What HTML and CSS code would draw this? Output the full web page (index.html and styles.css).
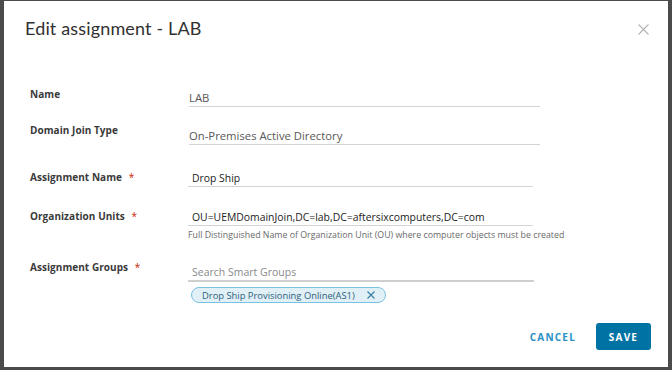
FILE: index.html
```html
<!DOCTYPE html>
<html>
<head>
<meta charset="utf-8">
<link rel="stylesheet" href="styles.css">
</head>
<body>
<div class="frame">
  <div class="modal">
    <div class="header">
      <h1 class="title">Edit assignment - LAB</h1>
      <svg class="close" width="11" height="11" viewBox="0 0 11 11"><path d="M0.5 0.5 L10.5 10.5 M10.5 0.5 L0.5 10.5" stroke="#b3b3b3" stroke-width="1.1" fill="none"/></svg>
    </div>
    <div class="form">
      <div class="row r1">
        <div class="label">Name</div>
        <div class="field ro">LAB</div>
      </div>
      <div class="row r2">
        <div class="label">Domain Join Type</div>
        <div class="field ro">On-Premises Active Directory</div>
      </div>
      <div class="row r3">
        <div class="label">Assignment Name <span class="req">*</span></div>
        <div class="field in">Drop Ship</div>
      </div>
      <div class="row r4">
        <div class="label">Organization Units <span class="req">*</span></div>
        <div class="col">
          <div class="field in">OU=UEMDomainJoin,DC=lab,DC=aftersixcomputers,DC=com</div>
          <div class="help">Full Distinguished Name of Organization Unit (OU) where computer objects must be created</div>
        </div>
      </div>
      <div class="row r5">
        <div class="label">Assignment Groups <span class="req">*</span></div>
        <div class="col">
          <div class="field in search">Search Smart Groups</div>
          <div class="chips">
            <span class="chip">Drop Ship Provisioning Online(AS1)
              <svg class="chip-x" width="8" height="8" viewBox="0 0 8 8"><path d="M0.5 0.5 L7.5 7.5 M7.5 0.5 L0.5 7.5" stroke="#3b7ea3" stroke-width="1.2" fill="none"/></svg>
            </span>
          </div>
        </div>
      </div>
    </div>
    <div class="footer">
      <button class="btn link">CANCEL</button>
      <button class="btn primary">SAVE</button>
    </div>
  </div>
</div>
</body>
</html>
```

FILE: styles.css
```css
* { box-sizing: border-box; }
html, body { margin: 0; padding: 0; }
body {
  width: 672px;
  height: 370px;
  background: #4b4b4b;
  font-family: "Open Sans", "Noto Sans", "Liberation Sans", sans-serif;
  overflow: hidden;
}
.frame {
  padding: 1px 4px 3px 4px;
  height: 370px;
}
.modal {
  background: #ffffff;
  height: 366px;
  width: 664px;
  display: flex;
  flex-direction: column;
}
.header {
  display: flex;
  justify-content: space-between;
  align-items: flex-start;
  padding: 15px 19px 0 21px;
  height: 84px;
}
.title {
  margin: 0;
  font-family: "Lato", "Open Sans", sans-serif;
  font-weight: 400;
  font-size: 18px;
  line-height: 24px;
  color: #313131;
  letter-spacing: 0.15px;
}
.close { margin-top: 8px; }
.form {
  display: flex;
  flex-direction: column;
  padding-left: 26px;
}
.row {
  display: grid;
  grid-template-columns: 158px auto;
  align-items: start;
}
.label {
  font-size: 10px;
  font-weight: 700;
  line-height: 16px;
  color: #3a3a3a;
  letter-spacing: 0.05px;
}
.req { color: #c92100; margin-left: 4px; font-weight: 400; }
.col { display: flex; flex-direction: column; }
.field {
  font-size: 11.3px;
  line-height: 16px;
  color: #575757;
  border-bottom: 1px solid #d4d4d4;
}
.field.ro { width: 351px; margin-left: 1px; }
.field.in { width: 345px; padding-left: 4px; color: #222; font-size: 10.4px; }
.r1 { margin-top: 1px; }
.r1 .field { margin-top: 4px; }
.r2 { margin-top: 15px; }
.r2 .field { margin-top: 6px; }
.r3 { margin-top: 24px; }
.r3 .field { margin-top: 1px; }
.r4 { margin-top: 21px; }
.r4 .field { margin-top: 1px; }
.help {
  font-size: 8.8px;
  line-height: 12px;
  color: #6a6a6a;
  margin-top: 3px;
}
.r5 { margin-top: 18px; }
.r5 .field { margin-top: 5px; border-bottom: 2px solid #cfcfcf; width: 346px; }
.field.search { color: #8a8a8a; font-size: 10.5px; }
.chips { margin-top: 5px; padding-left: 3px; display: flex; }
.chip {
  display: inline-flex;
  align-items: center;
  height: 16px;
  padding: 0 10px 0 10px;
  border: 1px solid #79c2e2;
  border-radius: 8px;
  background: #e1f0f6;
  color: #2d5f7c;
  font-size: 9.4px;
  width: 195px;
  justify-content: space-between;
}
.chip-x { margin-left: 8px; }
.footer {
  margin-top: auto;
  display: flex;
  justify-content: flex-end;
  align-items: center;
  padding: 0 17px 17px 0;
  gap: 20px;
}
.btn {
  font-family: "Open Sans", "Noto Sans", sans-serif;
  font-size: 10px;
  font-weight: 700;
  letter-spacing: 1.2px;
  border: none;
  cursor: pointer;
}
.btn.link {
  background: none;
  color: #2a8fc4;
  padding: 0;
}
.btn.primary {
  background: #0072a3;
  color: #ffffff;
  width: 55px;
  height: 27px;
  border-radius: 3px;
  padding: 0;
}
```
